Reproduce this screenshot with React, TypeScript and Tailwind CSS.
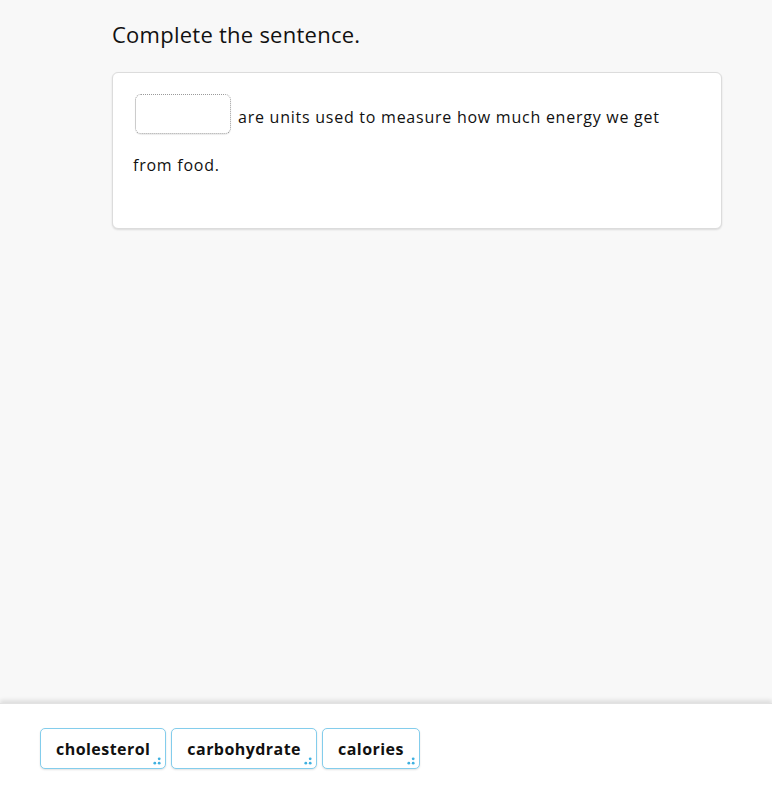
import React from "react";

function Dots() {
  return (
    <svg className="absolute right-[4px] bottom-[3px]" width="8" height="8" viewBox="0 0 8 8">
      <circle cx="6.2" cy="1.8" r="1.4" fill="#3fb0e0" />
      <circle cx="1.8" cy="6.2" r="1.4" fill="#3fb0e0" />
      <circle cx="6.2" cy="6.2" r="1.4" fill="#3fb0e0" />
    </svg>
  );
}

function Chip({ label }: { label: string }) {
  return (
    <div className="relative h-[41px] px-[15px] flex items-center rounded-[5px] border border-[#83cdec] bg-white shadow-[0_1px_2px_rgba(0,0,0,0.12)] text-[16px] font-bold tracking-[0.45px] text-[#111]">
      {label}
      <Dots />
    </div>
  );
}

export default function App() {
  return (
    <div
      className="w-[772px] h-[789px] bg-[#f8f8f8] flex flex-col text-[#111]"
      style={{ fontFamily: '"Open Sans", "Noto Sans", sans-serif' }}
    >
      <div className="flex-1 pl-[112px] pr-[50px] pt-[19px]">
        <h1 className="text-[22px] leading-[30px] tracking-[0.25px] font-normal">Complete the sentence.</h1>
        <div className="mt-[23px] bg-white border border-[#dcdcdc] rounded-[6px] shadow-[0_1px_2px_rgba(0,0,0,0.12)] pl-[20px] pr-[20px] pt-[17px] h-[157px]">
          <div className="text-[16px] tracking-[0.75px] leading-[48px]">
            <div className="flex items-center h-[48px]">
              <span className="inline-block ml-[2px] w-[96px] h-[40px] rounded-[6px] border border-dotted border-[#9a9a9a] bg-white mr-[7px] shadow-[0_1px_1px_rgba(0,0,0,0.08)]" />
              <span className="relative top-[3px]">are units used to measure how much energy we get</span>
            </div>
            <div className="mt-[3px]">from food.</div>
          </div>
        </div>
      </div>
      <div className="h-[86px] bg-white shadow-[0_-3px_4px_rgba(0,0,0,0.1)] border-t border-[#e2e2e2] flex items-start gap-[5px] pl-[40px] pt-[24px]">
        <Chip label="cholesterol" />
        <Chip label="carbohydrate" />
        <Chip label="calories" />
      </div>
    </div>
  );
}
